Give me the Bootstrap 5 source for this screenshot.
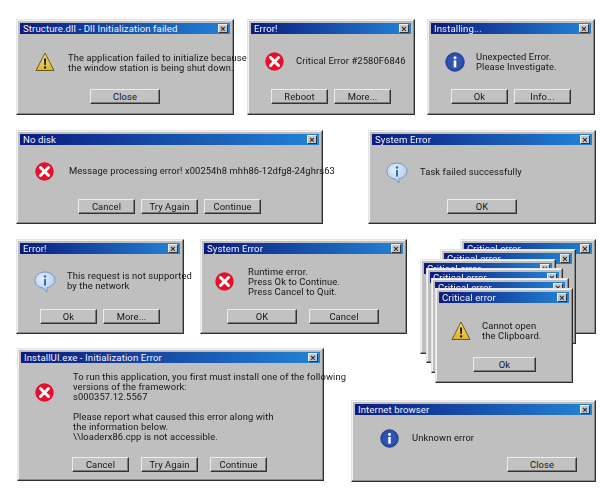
<!doctype html>
<html lang="en"><head><meta charset="utf-8"><title>Errors</title>
<link href="https://cdn.jsdelivr.net/npm/bootstrap@5.3.0/dist/css/bootstrap.min.css" rel="stylesheet">
<style>
html,body{background:#fff;margin:0;overflow:hidden}
.desk{position:relative;width:612px;height:500px;filter:blur(.3px);font-family:"Liberation Sans Narrow","Roboto",sans-serif;font-size:9.4px;line-height:10px;color:#151515;letter-spacing:.1px}
.win{position:absolute;background:#bfbfbf;border:1px solid;border-color:#e4e4e4 #2f2f2f #2f2f2f #e4e4e4;box-shadow:inset -1px -1px 0 #8a8a8a,inset 1px 1px 0 #f2f2f2;padding:3px}
.tbar{height:11px;padding:0 2px 0 3px;background:linear-gradient(90deg,#0b1b7e,#2284d6);color:#f2f4fb;font-size:9.6px;line-height:11px;white-space:nowrap;overflow:hidden}
.xbtn{width:10px;height:9px;padding:0;border-radius:0;background:#c8c8c8;border:1px solid;border-color:#eee #333 #333 #eee;color:#222;font-size:9px;font-weight:700;line-height:6px;font-family:"Liberation Sans",sans-serif;flex:none}
.ico{flex:none;display:block}
.txt{white-space:nowrap;margin:0}
.pbtn{height:15px;padding:0;border-radius:0;background:#c2c2c2;border:1px solid;border-color:#ececec #333 #333 #ececec;box-shadow:inset -1px -1px 0 #7b7b7b;color:#151515;font-size:9.4px;line-height:12px;letter-spacing:.1px;width:57px}
.pbtn:hover{background:#c2c2c2;border-color:#ececec #333 #333 #ececec;color:#151515}
.wide{width:70px}.mid{width:63px}
.btns{position:absolute;display:flex;gap:6px}

.w1{left:16px;top:19px;width:218px;height:96px}
.w2{left:247px;top:19px;width:168px;height:96px}
.w3{left:427px;top:19px;width:168px;height:96px}
.w4{left:16px;top:130px;width:307px;height:94px}
.w5{left:368px;top:130px;width:228px;height:94px}
.w6{left:16px;top:239px;width:168px;height:95px}
.w7{left:200px;top:239px;width:207px;height:95px}
.s1{left:460px;top:239px;width:136px;height:95px}
.s2{left:440px;top:249px;width:136px;height:95px}
.s3{left:420px;top:259px;width:136px;height:95px}
.s4{left:426px;top:268px;width:137px;height:95px}
.s5{left:431px;top:278px;width:138px;height:95px}
.s6{left:435px;top:288px;width:138px;height:95px}
.w8{left:17px;top:348px;width:307px;height:133px}
.w9{left:351px;top:400px;width:245px;height:82px}

.msg{display:flex;align-items:flex-start}
.w1 .msg{padding:18px 0 0 15px}.w1 .ico{margin-right:13px}.w1 .txt{margin-top:1px}
.w1 .btns{left:73px;bottom:10px}
.w2 .msg{padding:18px 0 0 14px}.w2 .ico{margin-right:12px}.w2 .txt{margin-top:4px}
.w2 .btns{left:23px;bottom:10px}
.w3 .msg{padding:18px 0 0 14px}.w3 .ico{margin-right:11px}.w3 .txt{margin-top:0}
.w3 .btns{left:23px;bottom:10px}
.w4 .msg{padding:17px 0 0 15px}.w4 .ico{margin-right:15px}.w4 .txt{margin-top:4px}
.w4 .btns{left:61px;bottom:9px}
.w5 .msg{padding:17px 0 0 14px}.w5 .ico{margin-right:12px}.w5 .txt{margin-top:5px}
.w5 .btns{left:78px;bottom:9px}
.w6 .msg{padding:17px 0 0 14px}.w6 .ico{margin-right:11px}.w6 .txt{margin-top:0}
.w6 .btns{left:23px;bottom:9px}
.w7 .msg{padding:13px 0 0 11px}.w7 .ico{margin-right:14px;margin-top:5px}.w7 .txt{margin-top:0}
.w7 .btns{left:26px;bottom:9px;gap:12px}
.s6 .msg{padding:18px 0 0 12px}.s6 .ico{margin-right:11px}.s6 .txt{margin-top:0}
.s6 .btns{left:37px;bottom:10px}
.w8 .msg{padding:9px 0 0 14px}.w8 .ico{margin-right:19px;margin-top:11px}
.w8 .btns{left:54px;bottom:8px;gap:12px}
.w9 .msg{padding:14px 0 0 25px}.w9 .ico{margin-right:13px}.w9 .txt{margin-top:4px}
.w9 .btns{left:155px;bottom:9px}
</style></head><body>
<svg width="0" height="0" class="position-absolute">
<defs>
<linearGradient id="gy" x1="0" y1="0" x2="0" y2="1"><stop offset="0" stop-color="#f6e27a"/><stop offset="1" stop-color="#d9b22e"/></linearGradient>
<radialGradient id="gb" cx=".4" cy=".35" r=".7"><stop offset="0" stop-color="#e6f1fb"/><stop offset="1" stop-color="#a9c8ea"/></radialGradient>
</defs>
<symbol id="i-warn" viewBox="0 0 20 20"><path d="M10 1 19 18.500H1Z" fill="url(#gy)" stroke="#6d5c18" stroke-width="1" stroke-linejoin="round"/><path d="M9 6.500h2.200l-.4 6.500h-1.400ZM9.100 14.300h2v2.100h-2Z" fill="#1c1708"/></symbol>
<symbol id="i-err" viewBox="0 0 19 19"><circle cx="9.500" cy="9.500" r="9.200" fill="#e6102d"/><path d="M5.500 5.500l8 8M13.500 5.500l-8 8" stroke="#fff" stroke-width="3" stroke-linecap="round"/></symbol>
<symbol id="i-inf" viewBox="0 0 20 20"><circle cx="10" cy="10" r="9.200" fill="#2a4ba6" stroke="#1c3a8f" stroke-width="1"/><circle cx="10" cy="10" r="7" fill="#2f55b4"/><circle cx="10" cy="5.800" r="1.500" fill="#fff"/><rect x="8.700" y="8.400" width="2.600" height="7" fill="#fff"/></symbol>
<symbol id="i-bub" viewBox="0 0 22 22"><path d="M11 1C5.500 1 1 4.600 1 9.200c0 4.200 3.400 7.200 8 7.700l4 4.100v-4.300c4.400-1 8-3.700 8-7.500C21 4.600 16.500 1 11 1Z" fill="url(#gb)" stroke="#7596c4" stroke-width="1"/><circle cx="11" cy="5.500" r="1.300" fill="#2f6fb4"/><rect x="10" y="8" width="2" height="6.500" fill="#2f6fb4"/></symbol>
</svg>
<div class="desk">

<section class="win w1">
<div class="tbar d-flex align-items-center justify-content-between"><span>Structure.dll - Dll Initialization failed</span><button class="btn xbtn">×</button></div>
<div class="msg"><svg class="ico" width="20" height="20"><use href="#i-warn"/></svg><p class="txt">The application failed to initialize because<br>the window station is being shut down.</p></div>
<div class="btns"><button class="btn pbtn wide">Close</button></div>
</section>

<section class="win w2">
<div class="tbar d-flex align-items-center justify-content-between"><span>Error!</span><button class="btn xbtn">×</button></div>
<div class="msg"><svg class="ico" width="19" height="19"><use href="#i-err"/></svg><p class="txt">Critical Error #2580F6846</p></div>
<div class="btns"><button class="btn pbtn">Reboot</button><button class="btn pbtn">More...</button></div>
</section>

<section class="win w3">
<div class="tbar d-flex align-items-center justify-content-between"><span>Installing...</span><button class="btn xbtn">×</button></div>
<div class="msg"><svg class="ico" width="20" height="20"><use href="#i-inf"/></svg><p class="txt">Unexpected Error.<br>Please Investigate.</p></div>
<div class="btns"><button class="btn pbtn">Ok</button><button class="btn pbtn">Info...</button></div>
</section>

<section class="win w4">
<div class="tbar d-flex align-items-center justify-content-between"><span>No disk</span><button class="btn xbtn">×</button></div>
<div class="msg"><svg class="ico" width="19" height="19"><use href="#i-err"/></svg><p class="txt">Message processing error! x00254h8 mhh86-12dfg8-24ghrs63</p></div>
<div class="btns"><button class="btn pbtn">Cancel</button><button class="btn pbtn">Try Again</button><button class="btn pbtn">Continue</button></div>
</section>

<section class="win w5">
<div class="tbar d-flex align-items-center justify-content-between"><span>System Error</span><button class="btn xbtn">×</button></div>
<div class="msg"><svg class="ico" width="22" height="22"><use href="#i-bub"/></svg><p class="txt">Task failed successfully</p></div>
<div class="btns"><button class="btn pbtn wide">OK</button></div>
</section>

<section class="win w6">
<div class="tbar d-flex align-items-center justify-content-between"><span>Error!</span><button class="btn xbtn">×</button></div>
<div class="msg"><svg class="ico" width="22" height="22"><use href="#i-bub"/></svg><p class="txt">This request is not supported<br>by the network</p></div>
<div class="btns"><button class="btn pbtn">Ok</button><button class="btn pbtn">More...</button></div>
</section>

<section class="win w7">
<div class="tbar d-flex align-items-center justify-content-between"><span>System Error</span><button class="btn xbtn">×</button></div>
<div class="msg"><svg class="ico" width="19" height="19"><use href="#i-err"/></svg><p class="txt">Runtime error.<br>Press Ok to Continue.<br>Press Cancel to Quit.</p></div>
<div class="btns"><button class="btn pbtn wide">OK</button><button class="btn pbtn wide">Cancel</button></div>
</section>

<section class="win s1"><div class="tbar d-flex align-items-center justify-content-between"><span>Critical error</span><button class="btn xbtn">×</button></div></section>
<section class="win s2"><div class="tbar d-flex align-items-center justify-content-between"><span>Critical error</span><button class="btn xbtn">×</button></div></section>
<section class="win s3"><div class="tbar d-flex align-items-center justify-content-between"><span>Critical error</span><button class="btn xbtn">×</button></div></section>
<section class="win s4"><div class="tbar d-flex align-items-center justify-content-between"><span>Critical error</span><button class="btn xbtn">×</button></div></section>
<section class="win s5"><div class="tbar d-flex align-items-center justify-content-between"><span>Critical error</span><button class="btn xbtn">×</button></div></section>
<section class="win s6">
<div class="tbar d-flex align-items-center justify-content-between"><span>Critical error</span><button class="btn xbtn">×</button></div>
<div class="msg"><svg class="ico" width="20" height="20"><use href="#i-warn"/></svg><p class="txt">Cannot open<br>the Clipboard.</p></div>
<div class="btns"><button class="btn pbtn mid">Ok</button></div>
</section>

<section class="win w8">
<div class="tbar d-flex align-items-center justify-content-between"><span>InstallUI.exe - Initialization Error</span><button class="btn xbtn">×</button></div>
<div class="msg"><svg class="ico" width="19" height="19"><use href="#i-err"/></svg><p class="txt">To run this application, you first must install one of the following<br>versions of the framework:<br>s000357.12.5567<br><br>Please report what caused this error along with<br>the information below.<br>\\loaderx86.cpp is not accessible.</p></div>
<div class="btns"><button class="btn pbtn">Cancel</button><button class="btn pbtn">Try Again</button><button class="btn pbtn">Continue</button></div>
</section>

<section class="win w9">
<div class="tbar d-flex align-items-center justify-content-between"><span>Internet browser</span><button class="btn xbtn">×</button></div>
<div class="msg"><svg class="ico" width="19" height="19"><use href="#i-inf"/></svg><p class="txt">Unknown error</p></div>
<div class="btns"><button class="btn pbtn wide">Close</button></div>
</section>

</div>
<script src="https://cdn.jsdelivr.net/npm/bootstrap@5.3.0/dist/js/bootstrap.bundle.min.js"></script>
</body></html>
